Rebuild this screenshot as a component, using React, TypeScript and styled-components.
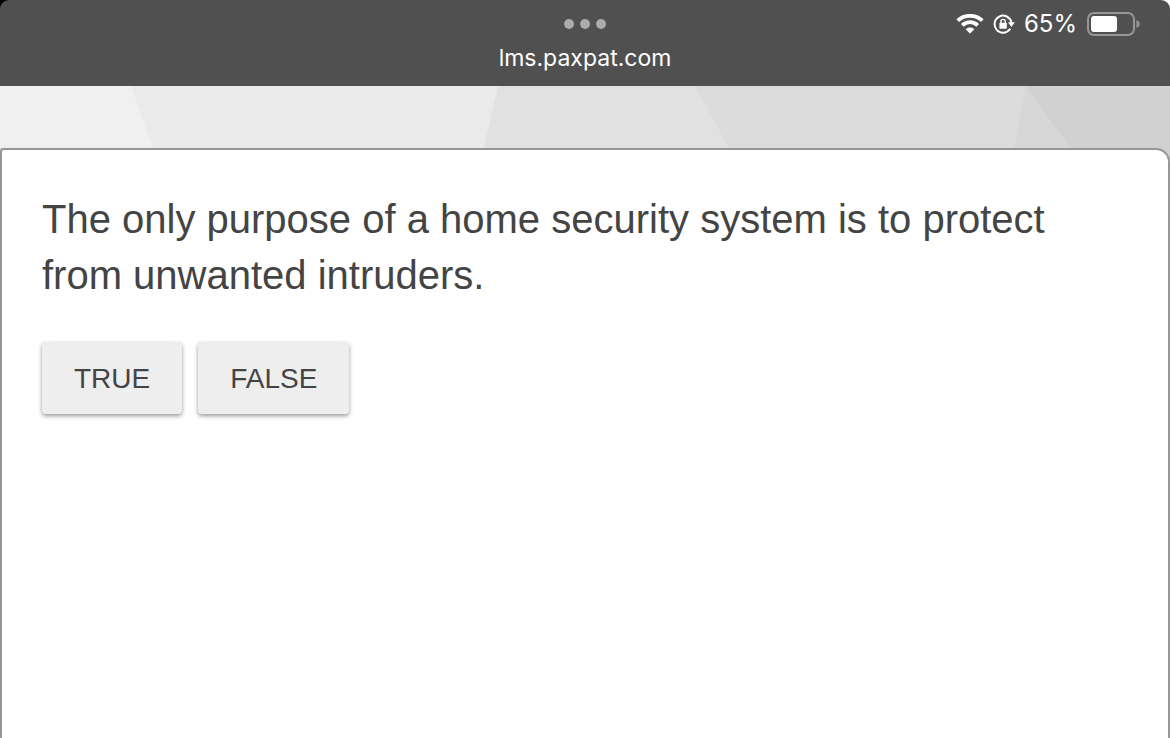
import React from "react";
import styled, { createGlobalStyle } from "styled-components";

const GlobalStyle = createGlobalStyle`
  *, *::before, *::after { box-sizing: border-box; }
  html, body, #root { height: 100%; }
  body {
    margin: 0;
    background: #d0d0d0;
    color: #444444;
    font-family: "Liberation Sans", Arial, sans-serif;
  }
`;

const Page = styled.div`
  display: flex;
  flex-direction: column;
  min-height: 100%;
`;

const TopBarBacking = styled.div`
  background: linear-gradient(90deg, #000000 50%, #ffffff 50%);
`;

const TopBar = styled.header`
  display: grid;
  grid-template-columns: 1fr auto 1fr;
  height: 86px;
  padding: 0 30px;
  background: #505050;
  border-radius: 9px 9px 0 0;
  color: #ffffff;
  font-family: Inter, "Liberation Sans", sans-serif;
`;

const AddressArea = styled.div`
  grid-column: 2;
  display: flex;
  flex-direction: column;
  align-items: center;
  gap: 15px;
  padding-top: 19px;
`;

const TabMenu = styled.button`
  display: flex;
  gap: 6px;
  padding: 0;
  border: 0;
  background: none;
`;

const Dot = styled.span`
  width: 10px;
  height: 10px;
  border-radius: 50%;
  background: #ababab;
`;

const Address = styled.span`
  font-size: 23px;
  line-height: 28px;
`;

const Status = styled.div`
  grid-column: 3;
  display: flex;
  justify-content: flex-end;
  align-items: center;
  gap: 9px;
  height: 48px;
`;

const Percent = styled.span`
  padding-right: 1px;
  font-size: 24px;
  line-height: 28px;
`;

const Icon = styled.svg`
  display: block;
  flex: none;
`;

const Backdrop = styled.svg`
  display: block;
  width: 100%;
  height: 62px;
`;

const Card = styled.main`
  flex: 1;
  padding: 41px 40px;
  border: 2px solid #969696;
  border-bottom: 0;
  border-radius: 4px 14px 0 0;
  background: #ffffff;
`;

const Question = styled.h1`
  margin: 0 0 39px;
  font-size: 40px;
  font-weight: 400;
  line-height: 56px;
`;

const Answers = styled.div`
  display: flex;
  gap: 16px;
`;

const Answer = styled.button`
  height: 72px;
  padding: 2px 32px 0;
  border: 0;
  border-radius: 4px;
  background: #eeeeee;
  box-shadow: 0 2px 4px rgba(0, 0, 0, 0.4);
  color: #444444;
  font-family: inherit;
  font-size: 28px;
  line-height: 32px;
`;

function WifiIcon() {
  return (
    <Icon width="28" height="20" viewBox="0 0 28 20" fill="none" aria-label="Wi-Fi">
      <path d="M1.7 6.7C8.4.2 19.6.2 26.3 6.7" stroke="#fff" strokeWidth="3.8" />
      <path d="M6.3 11.3C10.5 7.1 17.5 7.1 21.7 11.3" stroke="#fff" strokeWidth="3.8" />
      <path d="M9.6 15.2C12 12.9 16 12.9 18.4 15.2L14.6 19.1Q14 19.7 13.4 19.1Z" fill="#fff" />
    </Icon>
  );
}

function RotationLockIcon() {
  return (
    <Icon width="22" height="20" viewBox="0 0 22 20" fill="none" aria-label="Rotation lock">
      <path d="M18.4 8.4A8.5 8.5 0 1 0 17.2 14.8" stroke="#fff" strokeWidth="2" />
      <path d="M15 8.2H21.8L18.4 13Z" fill="#fff" />
      <rect x="6.4" y="8.8" width="7.4" height="6" rx="0.8" fill="#fff" />
      <path d="M7.9 9.3V7.4C7.9 4.7 12.3 4.7 12.3 7.4V9.3" stroke="#fff" strokeWidth="1.4" />
    </Icon>
  );
}

function BatteryIcon() {
  return (
    <Icon width="53" height="24" viewBox="0 0 53 24" fill="none" aria-label="Battery">
      <rect x="1" y="1" width="46" height="22" rx="6" stroke="#969696" strokeWidth="2" />
      <rect x="4" y="4" width="26" height="16" rx="3" fill="#fff" />
      <path d="M49.5 8C53.8 9.4 53.8 14.6 49.5 16Z" fill="#969696" />
    </Icon>
  );
}

export default function App() {
  return (
    <Page>
      <GlobalStyle />
      <TopBarBacking>
        <TopBar>
          <AddressArea>
            <TabMenu aria-label="Tab options">
              <Dot />
              <Dot />
              <Dot />
            </TabMenu>
            <Address>lms.paxpat.com</Address>
          </AddressArea>
          <Status>
            <WifiIcon />
            <RotationLockIcon />
            <Percent>65%</Percent>
            <BatteryIcon />
          </Status>
        </TopBar>
      </TopBarBacking>
      <Backdrop viewBox="0 0 1170 62" preserveAspectRatio="none" aria-hidden="true">
        <rect width="1170" height="62" fill="#f0f0f0" />
        <path d="M131 0H1170V62H153Z" fill="#eaeaea" />
        <path d="M498 0H1170V62H484Z" fill="#e1e1e1" />
        <path d="M695 0H1170V62H729Z" fill="#dcdcdc" />
        <path d="M1025 0H1170V62H1014Z" fill="#d7d7d7" />
        <path d="M1025 0H1170V62H1071Z" fill="#d1d1d1" />
      </Backdrop>
      <Card>
        <Question>
          The only purpose of a home security system is to protect from unwanted intruders.
        </Question>
        <Answers>
          <Answer>TRUE</Answer>
          <Answer>FALSE</Answer>
        </Answers>
      </Card>
    </Page>
  );
}
